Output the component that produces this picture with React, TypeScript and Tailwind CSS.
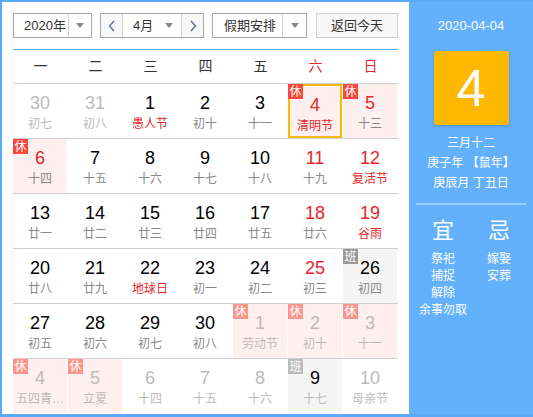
type Cell = {
  d: number;
  l: string;
  other?: boolean;
  rest?: boolean;
  work?: boolean;
  redNum?: boolean;
  redLunar?: boolean;
  today?: boolean;
};

const rows: Cell[][] = [
  [
    { d: 30, l: "初七", other: true },
    { d: 31, l: "初八", other: true },
    { d: 1, l: "愚人节", redLunar: true },
    { d: 2, l: "初十" },
    { d: 3, l: "十一" },
    { d: 4, l: "清明节", rest: true, redNum: true, redLunar: true, today: true },
    { d: 5, l: "十三", rest: true, redNum: true },
  ],
  [
    { d: 6, l: "十四", rest: true, redNum: true },
    { d: 7, l: "十五" },
    { d: 8, l: "十六" },
    { d: 9, l: "十七" },
    { d: 10, l: "十八" },
    { d: 11, l: "十九", redNum: true },
    { d: 12, l: "复活节", redNum: true, redLunar: true },
  ],
  [
    { d: 13, l: "廿一" },
    { d: 14, l: "廿二" },
    { d: 15, l: "廿三" },
    { d: 16, l: "廿四" },
    { d: 17, l: "廿五" },
    { d: 18, l: "廿六", redNum: true },
    { d: 19, l: "谷雨", redNum: true, redLunar: true },
  ],
  [
    { d: 20, l: "廿八" },
    { d: 21, l: "廿九" },
    { d: 22, l: "地球日", redLunar: true },
    { d: 23, l: "初一" },
    { d: 24, l: "初二" },
    { d: 25, l: "初三", redNum: true },
    { d: 26, l: "初四", work: true },
  ],
  [
    { d: 27, l: "初五" },
    { d: 28, l: "初六" },
    { d: 29, l: "初七" },
    { d: 30, l: "初八" },
    { d: 1, l: "劳动节", other: true, rest: true },
    { d: 2, l: "初十", other: true, rest: true },
    { d: 3, l: "十一", other: true, rest: true },
  ],
  [
    { d: 4, l: "五四青…", other: true, rest: true },
    { d: 5, l: "立夏", other: true, rest: true },
    { d: 6, l: "十四", other: true },
    { d: 7, l: "十五", other: true },
    { d: 8, l: "十六", other: true },
    { d: 9, l: "十七", other: true, work: true },
    { d: 10, l: "母亲节", other: true },
  ],
];

const weekdays = ["一", "二", "三", "四", "五", "六", "日"];

function Caret() {
  return <span className="w-0 h-0 border-x-[4px] border-x-transparent border-t-[5px] border-t-[#888]" />;
}

function Chevron({ dir }: { dir: "l" | "r" }) {
  return (
    <svg width="8" height="12" viewBox="0 0 8 12">
      <path
        d={dir === "l" ? "M6 1 L1.5 6 L6 11" : "M2 1 L6.5 6 L2 11"}
        fill="none"
        stroke="#5b6f9a"
        strokeWidth="1.4"
      />
    </svg>
  );
}

function DayCell({ c }: { c: Cell }) {
  const bg = c.rest ? "bg-[#fff0ef]" : c.work ? "bg-[#f5f5f5]" : "bg-white";
  const num = c.other && !c.work ? "text-[#bbb]" : c.redNum ? "text-[#e4262b]" : "text-black";
  const lunar = c.other ? "text-[#bbb]" : c.redLunar ? "text-[#e4262b]" : "text-[#888]";
  const badgeBg = c.rest
    ? c.other
      ? "bg-[#f9968c]"
      : "bg-[#f5473c]"
    : c.other
      ? "bg-[#bbb]"
      : "bg-[#999]";
  return (
    <div className={`relative h-[54px] border-r border-white ${bg}`}>
      <div
        className={`h-full flex flex-col items-center pt-[8px] ${
          c.today ? "border-2 border-[#ffb800] pt-[6px]" : ""
        }`}
      >
        <span className={`text-[18px] leading-[22px] font-['Liberation_Sans','Noto_Sans_CJK_SC',sans-serif] ${num}`}>
          {c.d}
        </span>
        <span className={`mt-[2px] text-[12px] leading-[16px] whitespace-nowrap ${lunar}`}>{c.l}</span>
      </div>
      {(c.rest || c.work) && (
        <span
          className={`absolute top-0 left-0 w-[15px] h-[15px] flex items-center justify-center text-[12px] leading-none text-white ${badgeBg}`}
        >
          {c.rest ? "休" : "班"}
        </span>
      )}
    </div>
  );
}

export default function App() {
  return (
    <div className="w-[533px] h-[417px] flex bg-[#5aa9f9] pt-[2px] pl-[2px] pb-[3px] font-['Liberation_Sans','Noto_Sans_CJK_SC',sans-serif] text-[13px] text-[#333]">
      <div className="w-[407px] h-full bg-white px-[11px] pt-[11px] flex flex-col">
        <div className="flex items-center h-[25px]">
          <div className="w-[79px] h-[25px] flex border border-[#a8a8a8] bg-white">
            <span className="flex-1 pl-[10px] leading-[23px]">2020年</span>
            <span className="w-[23px] border-l border-[#d0d0d0] flex items-center justify-center">
              <Caret />
            </span>
          </div>
          <div className="ml-[8px] w-[104px] h-[25px] flex border border-[#a8a8a8]">
            <span className="w-[22px] bg-[#f7f7f7] flex items-center justify-center border-r border-[#d0d0d0]">
              <Chevron dir="l" />
            </span>
            <span className="flex-1 flex items-center pl-[10px] pr-[8px] bg-white">
              <span className="flex-1">4月</span>
              <Caret />
            </span>
            <span className="w-[22px] bg-[#f7f7f7] flex items-center justify-center border-l border-[#d0d0d0]">
              <Chevron dir="r" />
            </span>
          </div>
          <div className="ml-[8px] w-[95px] h-[25px] flex border border-[#a8a8a8] bg-white">
            <span className="flex-1 pl-[11px] leading-[23px]">假期安排</span>
            <span className="w-[24px] border-l border-[#d0d0d0] flex items-center justify-center">
              <Caret />
            </span>
          </div>
          <div className="ml-[9px] w-[82px] h-[25px] border border-[#cfcfcf] bg-[#f7f7f7] flex items-center justify-center">
            返回今天
          </div>
        </div>
        <div className="mt-[11px] border-t border-[#5aa9f9]" />
        <div className="grid grid-cols-7 h-[34px] border-b border-[#d0d0d0]">
          {weekdays.map((w, i) => (
            <div
              key={w}
              className={`flex items-center justify-center text-[14px] ${i >= 5 ? "text-[#e4262b]" : "text-[#333]"}`}
            >
              {w}
            </div>
          ))}
        </div>
        {rows.map((r, ri) => (
          <div key={ri} className="grid grid-cols-7 border-b border-[#d0d0d0] last:border-b-0">
            {r.map((c, ci) => (
              <DayCell key={ci} c={c} />
            ))}
          </div>
        ))}
      </div>
      <div className="flex-1 bg-[#63b0fd] flex flex-col items-center text-white pt-[15px]">
        <div className="text-[13px] leading-[18px]">2020-04-04</div>
        <div className="mt-[16px] w-[75px] h-[74px] rounded-[3px] bg-[#ffb800] shadow-[0_1px_3px_rgba(0,0,0,0.2)] flex items-center justify-center text-[52px] text-white">
          4
        </div>
        <div className="mt-[8px] text-[12px] leading-[20px] text-center whitespace-nowrap">
          <div>三月十二</div>
          <div>庚子年 【鼠年】</div>
          <div>庚辰月 丁丑日</div>
        </div>
        <div className="mt-[10px] w-[110px] h-[2px] bg-[#9ccbfd]" />
        <div className="mt-[12px] flex w-[112px]">
          <div className="w-[56px] flex flex-col items-center">
            <div className="text-[22px] leading-[28px]">宜</div>
            <div className="mt-[6px] text-[12px] leading-[17px] text-center whitespace-nowrap">
              <div>祭祀</div>
              <div>捕捉</div>
              <div>解除</div>
              <div>余事勿取</div>
            </div>
          </div>
          <div className="w-[56px] flex flex-col items-center">
            <div className="text-[22px] leading-[28px]">忌</div>
            <div className="mt-[6px] text-[12px] leading-[17px] text-center">
              <div>嫁娶</div>
              <div>安葬</div>
            </div>
          </div>
        </div>
      </div>
    </div>
  );
}
